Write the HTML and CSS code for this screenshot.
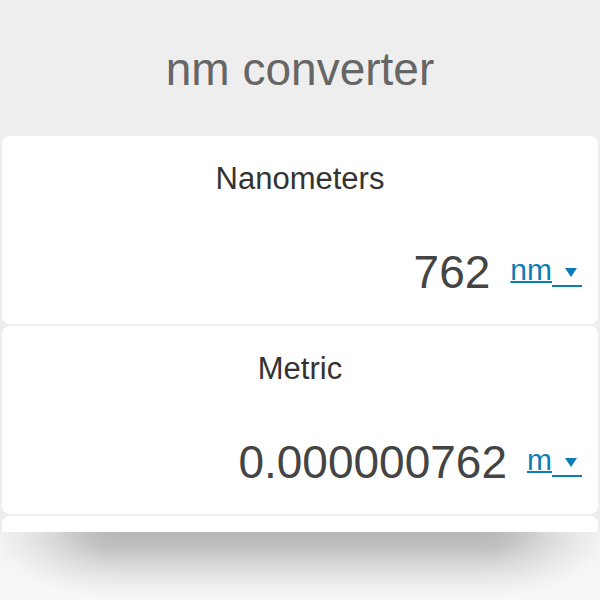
FILE: index.html
```html
<!DOCTYPE html>
<html lang="en">
<head>
<meta charset="utf-8">
<title>nm converter</title>
<link rel="stylesheet" href="styles.css">
</head>
<body>
<div class="widget">
  <header class="title-bar">
    <h1 class="title">nm converter</h1>
  </header>
  <div class="cards">
    <section class="card">
      <div class="label">Nanometers</div>
      <div class="value-row">
        <span class="value">762</span>
        <a class="unit"><span class="unit-name">nm</span><span class="caret"><span class="tri"></span></span></a>
      </div>
    </section>
    <section class="card">
      <div class="label">Metric</div>
      <div class="value-row">
        <span class="value">0.000000762</span>
        <a class="unit"><span class="unit-name">m</span><span class="caret"><span class="tri"></span></span></a>
      </div>
    </section>
    <section class="card"></section>
  </div>
</div>
<div class="widget-shadow"></div>
</body>
</html>
```
FILE: styles.css
```css
html, body {
  margin: 0;
  padding: 0;
  background: #ffffff;
}

body {
  font-family: "Liberation Sans", Arial, sans-serif;
}

.widget {
  width: 600px;
  height: 532px;
  box-sizing: border-box;
  padding: 0 2px;
  background: #eeeeee;
  overflow: hidden;
}

.widget-shadow {
  width: 600px;
  height: 68px;
  background:
    radial-gradient(ellipse 140px 68px at 100% 0, rgba(0,0,0,0.29), rgba(0,0,0,0.24) 25%, rgba(0,0,0,0.16) 45%, rgba(0,0,0,0.085) 70%, rgba(0,0,0,0.045) 90%, rgba(0,0,0,0.03) 100%) left top / 120px 68px no-repeat,
    radial-gradient(ellipse 140px 68px at 0 0, rgba(0,0,0,0.29), rgba(0,0,0,0.24) 25%, rgba(0,0,0,0.16) 45%, rgba(0,0,0,0.085) 70%, rgba(0,0,0,0.045) 90%, rgba(0,0,0,0.03) 100%) right top / 120px 68px no-repeat,
    linear-gradient(to bottom, rgba(0,0,0,0.29), rgba(0,0,0,0.24) 17px, rgba(0,0,0,0.16) 31px, rgba(0,0,0,0.085) 48px, rgba(0,0,0,0.045) 61px, rgba(0,0,0,0.03) 68px) center top / 360px 68px no-repeat;
}

.title-bar {
  padding: 46px 0 44px;
}

.title {
  margin: 0;
  font-size: 46px;
  line-height: 46px;
  font-weight: normal;
  color: #666666;
  text-align: center;
}

.cards {
  display: flex;
  flex-direction: column;
  gap: 2px;
}

.card {
  background: #ffffff;
  border-radius: 8px;
  padding: 27px 16px 29px;
  height: 188px;
  box-sizing: border-box;
  display: flex;
  flex-direction: column;
}

.label {
  font-size: 31px;
  line-height: 31px;
  color: #333333;
  text-align: center;
}

.value-row {
  margin-top: 55px;
  display: flex;
  justify-content: flex-end;
  align-items: center;
  gap: 20px;
}

.value {
  font-size: 46px;
  line-height: 46px;
  color: #444444;
}

.unit {
  display: inline-flex;
  align-items: flex-end;
  padding-bottom: 5px;
  font-size: 30px;
  line-height: 30px;
  color: #0b7db6;
  cursor: pointer;
}

.unit-name {
  text-decoration: underline;
  text-decoration-thickness: 2px;
}

.caret {
  display: flex;
  justify-content: flex-end;
  width: 30px;
  height: 17px;
  border-bottom: 2px solid #0b7db6;
  margin-bottom: -2px;
}

.tri {
  width: 0;
  height: 0;
  margin-right: 5px;
  border-left: 6.5px solid transparent;
  border-right: 6.5px solid transparent;
  border-top: 9px solid #0b7db6;
}
```
